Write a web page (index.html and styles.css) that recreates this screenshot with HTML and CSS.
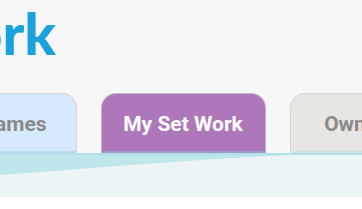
FILE: index.html
```html
<!DOCTYPE html>
<html lang="en">
<head>
<meta charset="utf-8">
<title>My Set Work</title>
<link rel="stylesheet" href="styles.css">
</head>
<body>
<header class="header">
  <div class="logo"><span class="logo-text">Work</span></div>
</header>
<nav class="tabs">
  <div class="tab tab-games">Our Games</div>
  <div class="tab tab-set">My Set Work</div>
  <div class="tab tab-own">Own Work</div>
</nav>
<section class="content">
  <svg class="wave" viewBox="0 0 362 24" preserveAspectRatio="none" aria-hidden="true">
    <path d="M0 0 H336 C220 4 110 14 0 22 Z" fill="#bee6eb"/>
    <rect x="0" y="0" width="362" height="2" fill="#b3dfe8"/>
  </svg>
</section>
</body>
</html>
```
FILE: styles.css
```css
html, body {
  margin: 0;
  padding: 0;
}
body {
  background: #ffffff;
  width: 362px;
  overflow: hidden;
  font-family: Roboto, "Liberation Sans", sans-serif;
}
.header {
  background: #f7f7f7;
  padding-top: 4px;
}
.logo {
  width: 56px;
  display: flex;
  justify-content: flex-end;
  white-space: nowrap;
}
.logo-text {
  font-family: Lato, "Open Sans", sans-serif;
  font-weight: 900;
  font-size: 58px;
  line-height: 58px;
  color: #1ba1dc;
}
.tabs {
  background: #f7f7f7;
  display: flex;
  justify-content: center;
  gap: 24px;
  padding-top: 31px;
  padding-left: 4px;
}
.tab {
  flex: 0 0 165px;
  box-sizing: border-box;
  height: 60px;
  border: 1px solid #d3d3d3;
  border-bottom: 2px solid transparent;
  border-radius: 15px 15px 0 0;
  padding-top: 3px;
  line-height: 54px;
  text-align: center;
  font-weight: 700;
  font-size: 21px;
  white-space: nowrap;
}
.tab-games {
  background: #d7eafb;
  color: #8a8a8a;
  border-bottom-color: #b5dcec;
}
.tab-set {
  background: #ae77b9;
  color: #ffffff;
  border-color: #c4b2c8;
  border-bottom-color: #9c9ec8;
}
.tab-own {
  background: #e8e6e3;
  color: #8a8a8a;
  border-bottom-color: #cde2e4;
}
.content {
  background: #ecf4f5;
  height: 44px;
}
.wave {
  display: block;
  width: 100%;
  height: 24px;
}
```
